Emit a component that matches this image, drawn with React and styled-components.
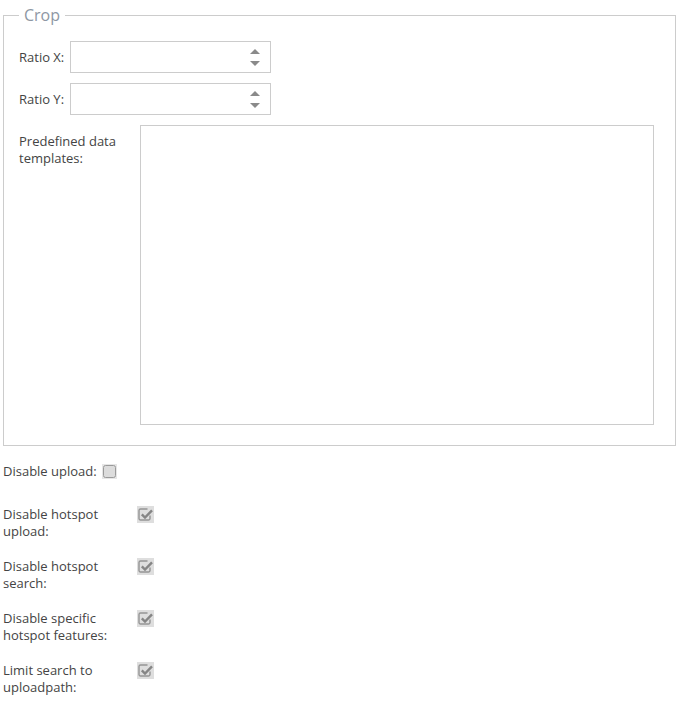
import React from "react";
import styled, { createGlobalStyle } from "styled-components";

const GlobalStyle = createGlobalStyle`
  html, body {
    margin: 0;
    padding: 0;
    background: #fff;
  }
  body {
    font-family: "Open Sans", "Liberation Sans", sans-serif;
    font-size: 13px;
    color: #444;
  }
`;

const Page = styled.div`
  width: 673px;
  padding: 4px 3px 0 3px;
`;

const Fieldset = styled.fieldset`
  margin: 0;
  padding: 15px 21px 20px 15px;
  border: 1px solid #ccc;
  min-width: 0;
`;

const Legend = styled.legend`
  padding: 0 5px;
  font-size: 16px;
  line-height: 22px;
  color: #8e97a4;
`;

const FieldRow = styled.div`
  display: flex;
  align-items: ${(p) => (p.$top ? "flex-start" : "center")};
  gap: 6px;
  margin-bottom: 10px;

  &:last-child {
    margin-bottom: 0;
  }
`;

const Label = styled.label`
  line-height: 17px;
  max-width: ${(p) => p.$max || "none"};
  flex: ${(p) => (p.$max ? `0 0 ${p.$max}` : "0 0 auto")};
  padding-top: ${(p) => p.$pt || "0"};
`;

const SpinWrap = styled.div`
  position: relative;
  width: 201px;
  height: 32px;
  border: 1px solid #ccc;
  box-sizing: border-box;
`;

const SpinInput = styled.input`
  width: 100%;
  height: 100%;
  border: none;
  outline: none;
  box-sizing: border-box;
  padding: 0 30px 0 6px;
  font: inherit;
  background: transparent;
`;

const Arrows = styled.div`
  position: absolute;
  right: 10px;
  top: 7px;
  display: flex;
  flex-direction: column;
  gap: 7px;
`;

const Arrow = styled.span`
  width: 0;
  height: 0;
  border-left: 5px solid transparent;
  border-right: 5px solid transparent;
  ${(p) =>
    p.$down
      ? "border-top: 5px solid #8a8a8a;"
      : "border-bottom: 5px solid #8a8a8a;"}
`;

const TextArea = styled.textarea`
  flex: 1;
  height: 300px;
  border: 1px solid #ccc;
  box-sizing: border-box;
  resize: none;
  outline: none;
  font: inherit;
  margin: 0;
`;

const Options = styled.div`
  display: flex;
  flex-direction: column;
  gap: 18px;
  padding-top: 17px;
`;

const OptionRow = styled.div`
  display: flex;
  align-items: ${(p) => (p.$inline ? "center" : "flex-start")};
  gap: ${(p) => (p.$inline ? "5px" : "6px")};
  margin-bottom: ${(p) => (p.$inline ? "8px" : "0")};
`;

const Box = styled.span`
  display: inline-flex;
  width: ${(p) => (p.$checked ? "17px" : "15px")};
  height: ${(p) => (p.$checked ? "17px" : "15px")};
  flex: 0 0 auto;

  svg {
    display: block;
  }
`;

function Spinner() {
  return (
    <SpinWrap>
      <SpinInput type="text" />
      <Arrows>
        <Arrow />
        <Arrow $down />
      </Arrows>
    </SpinWrap>
  );
}

function CheckBox({ checked }) {
  if (!checked) {
    return (
      <Box>
        <svg width="15" height="15" viewBox="0 0 15 15">
          <rect x="0" y="0" width="15" height="15" fill="#e6e6e6" />
          <rect x="1.5" y="1.5" width="12" height="12" rx="2" fill="#dcdcdc" stroke="#9a9a9a" strokeWidth="1" />
        </svg>
      </Box>
    );
  }
  return (
    <Box $checked>
      <svg width="17" height="17" viewBox="0 0 17 17">
        <rect x="0" y="0" width="17" height="17" fill="#dedede" />
        <path d="M13 9.5v3a1.5 1.5 0 0 1-1.5 1.5h-8A1.5 1.5 0 0 1 2 12.5v-8A1.5 1.5 0 0 1 3.5 3h7" fill="none" stroke="#959595" strokeWidth="1.4" />
        <path d="M4.8 8.3l3.2 3.2 7-7.2" fill="none" stroke="#858585" strokeWidth="2.4" />
      </svg>
    </Box>
  );
}

const options = [
  "Disable hotspot upload:",
  "Disable hotspot search:",
  "Disable specific hotspot features:",
  "Limit search to uploadpath:",
];

export default function App() {
  return (
    <Page>
      <GlobalStyle />
      <Fieldset>
        <Legend>Crop</Legend>
        <FieldRow>
          <Label>Ratio X:</Label>
          <Spinner />
        </FieldRow>
        <FieldRow>
          <Label>Ratio Y:</Label>
          <Spinner />
        </FieldRow>
        <FieldRow $top>
          <Label $max="115px" $pt="8px">Predefined data templates:</Label>
          <TextArea />
        </FieldRow>
      </Fieldset>
      <Options>
        <OptionRow $inline>
          <Label>Disable upload:</Label>
          <CheckBox />
        </OptionRow>
        {options.map((text) => (
          <OptionRow key={text}>
            <Label $max="128px">{text}</Label>
            <CheckBox checked />
          </OptionRow>
        ))}
      </Options>
    </Page>
  );
}
